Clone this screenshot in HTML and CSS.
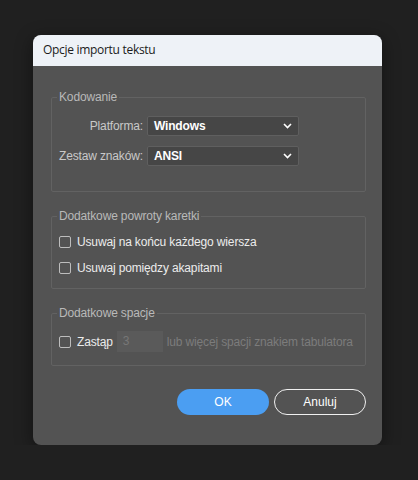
FILE: index.html
```html
<!DOCTYPE html>
<html lang="pl">
<head>
    <meta charset="UTF-8">
    <title>Opcje importu tekstu</title>
    <link rel="stylesheet" href="styles.css">
</head>
<body>
    <div class="dialog">
        <div class="title-bar">Opcje importu tekstu</div>

        <div class="dialog-body">
            <fieldset class="group">
                <legend>Kodowanie</legend>
                <div class="form-grid">
                    <label class="field-label">Platforma:</label>
                    <div class="select">
                        <span>Windows</span>
                        <svg class="chevron" width="9" height="6" viewBox="0 0 9 6"><path d="M1 1l3.5 3.5L8 1" fill="none" stroke="#fff" stroke-width="1.6"/></svg>
                    </div>
                    <label class="field-label">Zestaw znaków:</label>
                    <div class="select">
                        <span>ANSI</span>
                        <svg class="chevron" width="9" height="6" viewBox="0 0 9 6"><path d="M1 1l3.5 3.5L8 1" fill="none" stroke="#fff" stroke-width="1.6"/></svg>
                    </div>
                </div>
            </fieldset>

            <fieldset class="group group-checks">
                <legend>Dodatkowe powroty karetki</legend>
                <div class="check-list">
                    <label class="check"><span class="box"></span>Usuwaj na końcu każdego wiersza</label>
                    <label class="check"><span class="box"></span>Usuwaj pomiędzy akapitami</label>
                </div>
            </fieldset>

            <fieldset class="group group-last">
                <legend>Dodatkowe spacje</legend>
                <div class="spaces-row">
                    <label class="check"><span class="box"></span>Zastąp</label>
                    <div class="num-input">3</div>
                    <span class="muted">lub więcej spacji znakiem tabulatora</span>
                </div>
            </fieldset>

            <div class="buttons">
                <button class="btn btn-primary">OK</button>
                <button class="btn btn-outline">Anuluj</button>
            </div>
        </div>
    </div>
</body>
</html>
```

FILE: styles.css
```css
body {
    margin: 0;
    background: #202020;
    font-family: 'Liberation Sans', Arial, sans-serif;
    font-size: 12px;
    letter-spacing: -0.15px;
    color: #e6e6e6;
}
.dialog {
    width: 349px;
    margin: 35px 0 0 33px;
    border-radius: 8px;
    overflow: hidden;
    background: #535353;
    box-shadow: 0 4px 18px rgba(0, 0, 0, 0.45);
}
.title-bar {
    height: 31px;
    line-height: 30px;
    padding-left: 10px;
    background: #eef2f7;
    color: #1b1b1b;
    font-family: 'Open Sans', 'Noto Sans', sans-serif;
    font-size: 12px;
    letter-spacing: -0.3px;
}
.dialog-body {
    padding: 24px 16px 30px 18px;
}
.group {
    margin: 0 0 17px 0;
    padding: 12px 7px 25px 7px;
    border: 1px solid #626262;
    border-radius: 2px;
}
.group legend {
    padding: 0 2px;
    margin-left: -2px;
    color: #b9b9b9;
    line-height: 14px;
    white-space: nowrap;
}
.form-grid {
    display: grid;
    grid-template-columns: auto 152px;
    justify-content: start;
    column-gap: 4px;
    row-gap: 10px;
    align-items: center;
}
.field-label {
    text-align: right;
    color: #c9c9c9;
    white-space: nowrap;
}
.select {
    height: 18px;
    display: flex;
    align-items: center;
    justify-content: space-between;
    padding: 0 6px 0 6px;
    background: #464646;
    border: 1px solid #5f5f5f;
    border-radius: 2px;
    color: #fff;
    font-weight: bold;
}
.group-checks {
    padding-bottom: 13px;
}
.check-list {
    display: flex;
    flex-direction: column;
    gap: 12px;
}
.check {
    display: flex;
    align-items: center;
    gap: 6px;
    color: #ececec;
    white-space: nowrap;
}
.box {
    width: 10px;
    height: 10px;
    border: 1px solid #bdbdbd;
    border-radius: 2px;
}
.group-last {
    padding-top: 11px;
    padding-bottom: 13px;
    margin-bottom: 22px;
}
.spaces-row {
    display: flex;
    align-items: center;
    gap: 4px;
}
.num-input {
    width: 40px;
    height: 21px;
    line-height: 21px;
    padding-left: 6px;
    background: #5a5a5a;
    color: #777;
}
.muted {
    color: #7c7c7c;
    white-space: nowrap;
}
.buttons {
    display: flex;
    justify-content: flex-end;
    gap: 5px;
    padding-top: 1px;
}
.btn {
    width: 92px;
    height: 26px;
    border-radius: 13px;
    font-family: 'Liberation Sans', Arial, sans-serif;
    font-size: 12px;
    color: #fff;
    cursor: pointer;
}
.btn-primary {
    background: #4b9ef2;
    border: none;
}
.btn-outline {
    background: transparent;
    border: 1.5px solid #f0f0f0;
}
```
